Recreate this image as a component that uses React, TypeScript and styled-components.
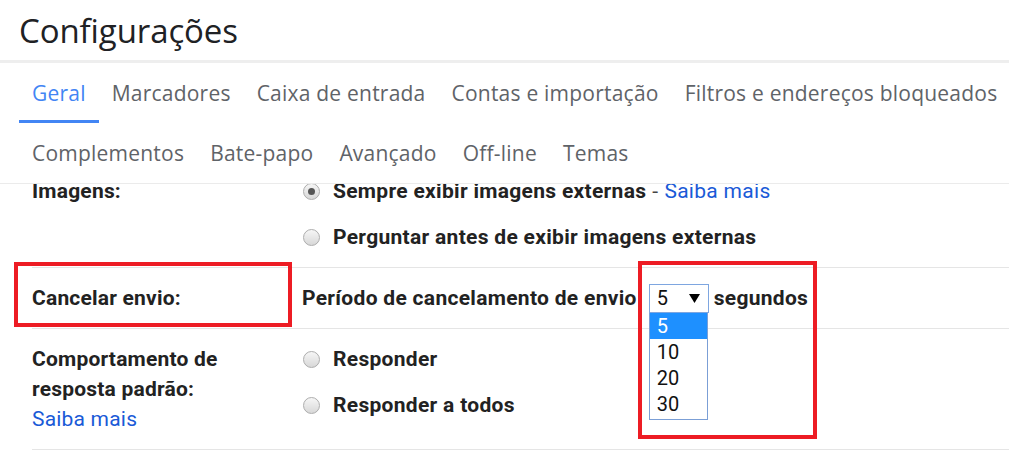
import styled, { createGlobalStyle } from 'styled-components';

const GlobalStyle = createGlobalStyle`
  html, body {
    margin: 0;
    padding: 0;
    background: #fff;
  }
  body {
    font-family: Roboto, 'Liberation Sans', Arial, sans-serif;
    color: #222;
  }
`;

const Page = styled.div`
  width: 1009px;
  height: 451px;
  overflow: hidden;
  background: #fff;
`;

const Header = styled.div`
  height: 60px;
  padding-left: 19px;
  display: flex;
  align-items: center;
  border-bottom: 3px solid #eeeeee;
`;

const Title = styled.h1`
  margin: 0;
  font-family: 'Open Sans', Roboto, sans-serif;
  font-weight: 400;
  font-size: 33px;
  color: #202124;
  letter-spacing: -0.1px;
`;

const TabArea = styled.div`
  padding-left: 19px;
  height: 120px;
  border-bottom: 1px solid #ebebeb;
`;

const TabRow = styled.div`
  display: flex;
  height: 60px;
`;

const Tab = styled.div<{ $active?: boolean }>`
  display: flex;
  align-items: center;
  padding: 3px 13px 0;
  font-family: 'Open Sans', Roboto, sans-serif;
  font-size: 21px;
  letter-spacing: 0.22px;
  white-space: nowrap;
  color: ${(p) => (p.$active ? '#4285f4' : '#5f6368')};
  border-bottom: 3px solid ${(p) => (p.$active ? '#4285f4' : 'transparent')};
  box-sizing: border-box;
`;

const Content = styled.div`
  height: 267px;
  overflow: hidden;
`;

const Settings = styled.div`
  margin-top: -23px;
  padding-left: 32px;
`;

const Row = styled.div`
  position: relative;
  display: flex;
  padding: 15px 0;
  border-bottom: 1px solid #e5e5e5;
`;

const Label = styled.div`
  width: 270px;
  flex: none;
  font-size: 21px;
  letter-spacing: 0.2px;
  font-weight: 700;
  line-height: 30px;
  color: #222;
`;

const Value = styled.div`
  flex: 1;
  display: flex;
  flex-direction: column;
  gap: 16px;
  font-size: 21px;
  letter-spacing: 0.3px;
  font-weight: 700;
  line-height: 30px;
`;

const Line = styled.div`
  display: flex;
  align-items: center;
  white-space: nowrap;
`;

const Dash = styled.span`
  font-weight: 400;
  color: #444;
  margin: 0 6px;
`;

const Link = styled.span`
  color: #1a5ad7;
  font-weight: 400;
`;

const Radio = styled.span<{ $checked?: boolean }>`
  width: 15px;
  height: 15px;
  margin: 0 13px 0 1px;
  border-radius: 50%;
  border: 1px solid #adadad;
  background: linear-gradient(#f6f6f6, #d8d8d8);
  display: flex;
  align-items: center;
  justify-content: center;
  flex: none;

  &::after {
    content: '';
    display: ${(p) => (p.$checked ? 'block' : 'none')};
    width: 7px;
    height: 7px;
    border-radius: 50%;
    background: #555;
  }
`;

const SelectWrap = styled.div`
  position: relative;
  margin: 0 5px 0 12px;
`;

const Select = styled.div`
  width: 60px;
  height: 29px;
  box-sizing: border-box;
  border: 1px solid #7ea6e0;
  display: flex;
  align-items: center;
  justify-content: space-between;
  padding: 0 8px 0 7px;
  font-weight: 400;
  font-size: 20px;
  letter-spacing: 0;
  color: #111;
`;

const Options = styled.div`
  position: absolute;
  top: 29px;
  left: 0;
  width: 59px;
  box-sizing: border-box;
  border: 1px solid #7b9fd6;
  border-top: none;
  background: #fff;
  padding-bottom: 2px;
  z-index: 2;
`;

const Option = styled.div<{ $selected?: boolean }>`
  height: 26px;
  line-height: 26px;
  padding-left: 7px;
  font-size: 20px;
  font-weight: 400;
  letter-spacing: 0;
  color: ${(p) => (p.$selected ? '#fff' : '#111')};
  background: ${(p) => (p.$selected ? '#1e90ff' : 'transparent')};
`;

const Mark = styled.div<{ $left: number; $top: number; $w: number; $h: number }>`
  position: absolute;
  left: ${(p) => p.$left}px;
  top: ${(p) => p.$top}px;
  width: ${(p) => p.$w}px;
  height: ${(p) => p.$h}px;
  box-sizing: border-box;
  border: 4px solid #ed1c24;
  pointer-events: none;
  z-index: 3;
`;

const tabsTop = ['Geral', 'Marcadores', 'Caixa de entrada', 'Contas e importação', 'Filtros e endereços bloqueados'];
const tabsBottom = ['Complementos', 'Bate-papo', 'Avançado', 'Off-line', 'Temas'];

export default function App() {
  return (
    <Page>
      <GlobalStyle />
      <Header>
        <Title>Configurações</Title>
      </Header>
      <TabArea>
        <TabRow>
          {tabsTop.map((t, i) => (
            <Tab key={t} $active={i === 0}>
              {t}
            </Tab>
          ))}
        </TabRow>
        <TabRow>
          {tabsBottom.map((t) => (
            <Tab key={t}>{t}</Tab>
          ))}
        </TabRow>
      </TabArea>
      <Content>
        <Settings>
          <Row>
            <Label>Imagens:</Label>
            <Value>
              <Line>
                <Radio $checked />
                Sempre exibir imagens externas<Dash>-</Dash>
                <Link>Saiba mais</Link>
              </Line>
              <Line>
                <Radio />
                Perguntar antes de exibir imagens externas
              </Line>
            </Value>
          </Row>
          <Row>
            <Mark $left={-18} $top={-6} $w={278} $h={65} />
            <Label>Cancelar envio:</Label>
            <Value>
              <Line>
                Período de cancelamento de envio
                <SelectWrap>
                  <Select>
                    5
                    <svg width="11" height="9" viewBox="0 0 11 9">
                      <path d="M0 0h11L5.5 9z" fill="#000" />
                    </svg>
                  </Select>
                  <Options>
                    <Option $selected>5</Option>
                    <Option>10</Option>
                    <Option>20</Option>
                    <Option>30</Option>
                  </Options>
                </SelectWrap>
                segundos
              </Line>
            </Value>
            <Mark $left={606} $top={-7} $w={179} $h={178} />
          </Row>
          <Row>
            <Label>
              Comportamento de
              <br />
              resposta padrão:
              <br />
              <Link>Saiba mais</Link>
            </Label>
            <Value>
              <Line>
                <Radio />
                Responder
              </Line>
              <Line>
                <Radio />
                Responder a todos
              </Line>
            </Value>
          </Row>
        </Settings>
      </Content>
    </Page>
  );
}
